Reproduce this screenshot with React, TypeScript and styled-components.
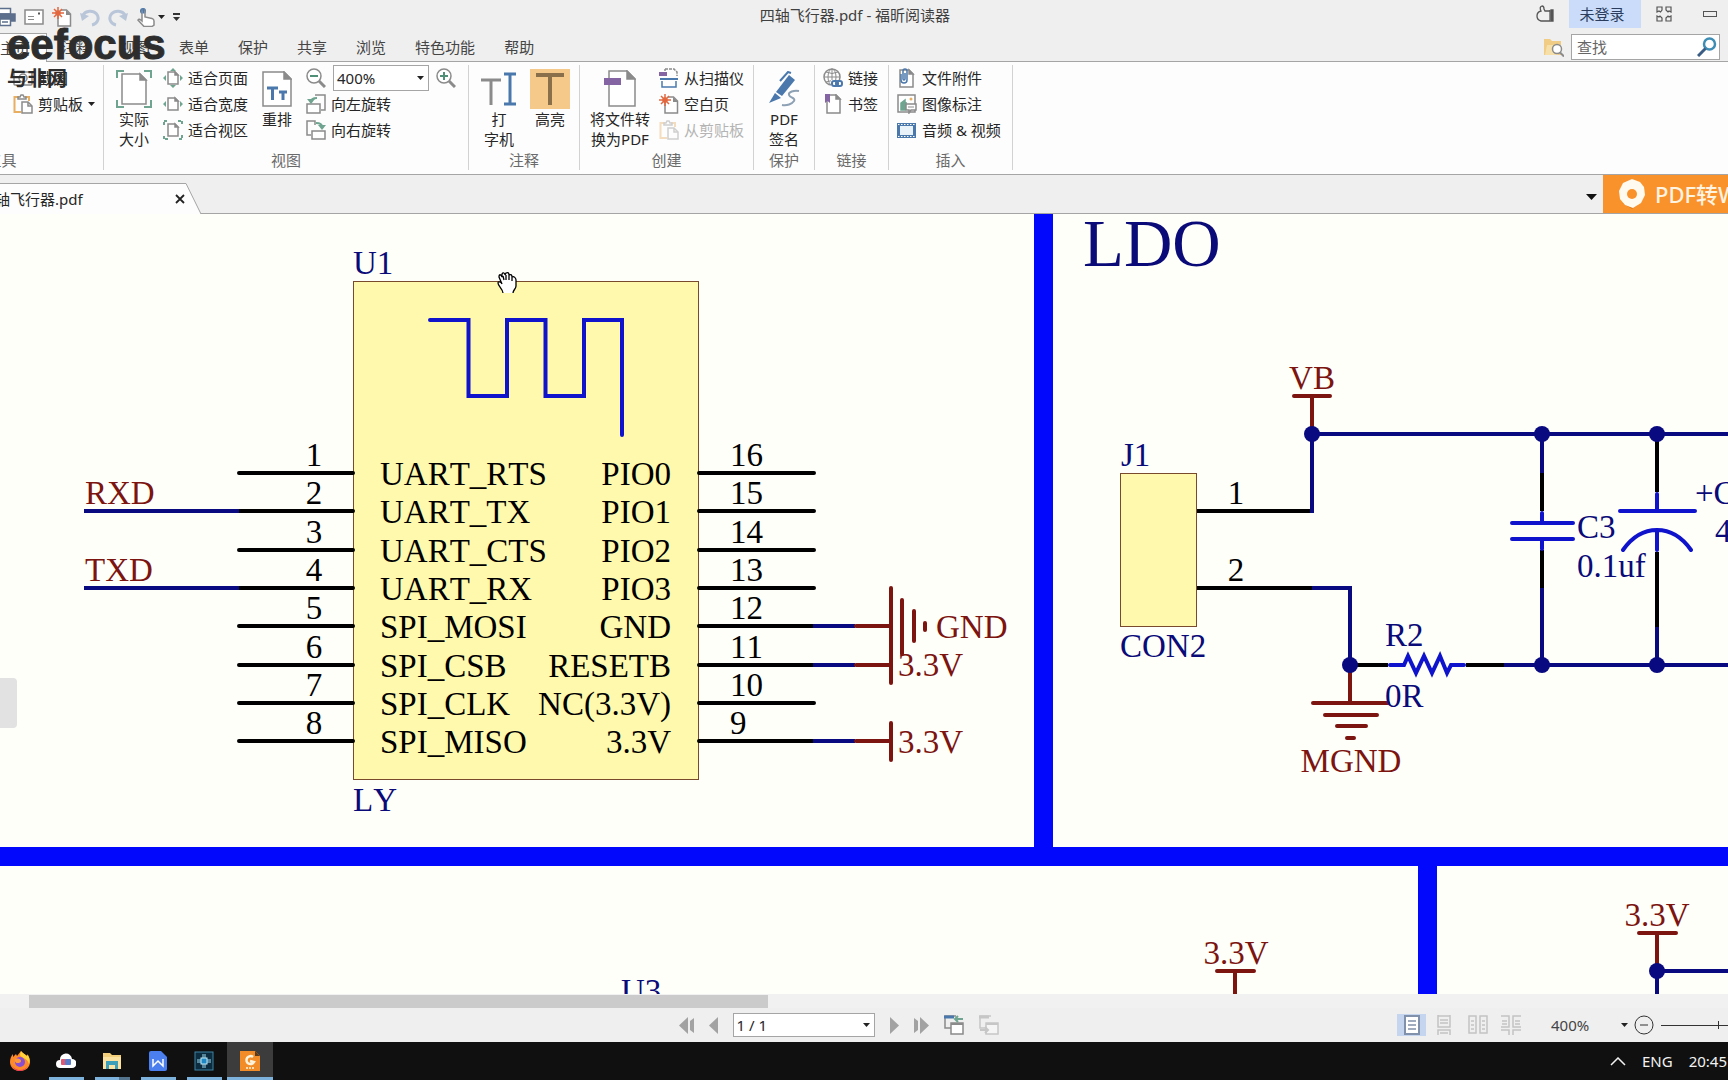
import React from "react";
import styled, { createGlobalStyle, css } from "styled-components";

const GlobalStyle = createGlobalStyle`
  *, *::before, *::after { box-sizing: border-box; }
  body { margin: 0; overflow: hidden; }
  button, select, input {
    font: inherit;
    color: inherit;
    margin: 0;
    padding: 0;
    border: 0;
    background: none;
  }
  button { cursor: pointer; }
  svg { display: block; flex: none; }
`;

const ui = {
  chrome: "#efefef",
  panel: "#fdfdfd",
  line: "#a5a5a5",
  text: "#262626",
  muted: "#6a6a6a",
  grey: "#8b8b8b",
  green: "#6fa590",
  blue: "#4a78ad",
  purple: "#8564a4",
  orange: "#e2683f",
};

/* ---------- window frame ---------- */

const Shell = styled.div`
  position: relative;
  display: flex;
  flex-direction: column;
  height: 100vh;
  overflow: hidden;
  background: ${ui.chrome};
  color: ${ui.text};
  font: 15px/20px "Noto Sans", "Noto Sans CJK SC", sans-serif;
`;

const TitleBar = styled.header`
  display: grid;
  grid-template-columns: 1fr auto 1fr;
  height: 33px;
  flex: none;
`;

const QuickAccess = styled.div`
  display: flex;
  align-items: center;
  gap: 8px;
`;

const IconButton = styled.button`
  display: flex;
  align-items: center;
  justify-content: center;
  gap: 2px;
  flex: none;
`;

const WindowTitle = styled.h1`
  margin: 0;
  padding: 5px 18px 0 0;
  font-size: 15px;
  font-weight: 400;
  line-height: 20px;
  color: #404040;
`;

const WindowTools = styled.div`
  display: flex;
  justify-content: flex-end;
  gap: 15px;
  height: 28px;
  padding-right: 11px;
`;

const Login = styled.button`
  width: 72px;
  padding-right: 6px;
  background: #cadcfa;
  color: #2c3c5c;
  text-align: center;
`;

const MenuRow = styled.nav`
  display: flex;
  height: 29px;
  flex: none;
  border-bottom: 1px solid ${ui.line};
`;

const MenuTab = styled.button<{ $active?: boolean }>`
  padding: 0 15px 0 14px;
  color: #454545;
  ${(p) =>
    p.$active &&
    css`
      height: 29px;
      padding: 0 16px 0 0;
      background: ${ui.panel};
      border-top: 1px solid ${ui.line};
      border-right: 1px solid ${ui.line};
    `}
`;

const SearchArea = styled.form`
  display: flex;
  align-items: center;
  gap: 7px;
  margin-left: auto;
  padding-right: 8px;
`;

const SearchField = styled.label`
  display: flex;
  align-items: center;
  width: 149px;
  height: 26px;
  padding: 0 2px 0 5px;
  background: #fff;
  border: 1px solid ${ui.line};
`;

const SearchInput = styled.input`
  flex: 1;
  min-width: 0;
  outline: 0;
  &::placeholder {
    color: #666;
    opacity: 1;
  }
`;

/* ---------- ribbon ---------- */

const Ribbon = styled.div`
  display: flex;
  height: 113px;
  flex: none;
  padding: 3px 0 4px;
  background: ${ui.panel};
  border-bottom: 1px solid ${ui.line};
`;

const Group = styled.section<{ $w: number; $cut?: boolean }>`
  display: flex;
  flex-direction: column;
  flex: none;
  width: ${(p) => p.$w}px;
  border-right: 1px solid #d2d2d2;
  ${(p) => p.$cut && "margin-left: -100px;"}
`;

const GroupBody = styled.div<{ $pad?: number }>`
  display: flex;
  gap: 7px;
  height: 85px;
  padding-left: ${(p) => p.$pad ?? 8}px;
`;

const GroupName = styled.h2`
  margin: 0;
  font-size: 15px;
  font-weight: 400;
  line-height: 20px;
  text-align: center;
  color: ${ui.muted};
`;

const Stack = styled.div`
  display: flex;
  flex-direction: column;
`;

const Row = styled.div`
  display: flex;
  align-items: center;
  gap: 7px;
  height: 26px;
`;

const SmallButton = styled.button`
  display: flex;
  align-items: center;
  gap: 5px;
  height: 26px;
  white-space: nowrap;
  &:disabled {
    color: #b4b4b4;
  }
`;

const BigButton = styled.button<{ $wide?: boolean }>`
  display: flex;
  flex-direction: column;
  align-items: center;
  width: ${(p) => (p.$wide ? 64 : 44)}px;
  padding-top: 4px;
`;

const BigIcon = styled.span<{ $on?: boolean }>`
  display: flex;
  align-items: center;
  justify-content: center;
  width: 40px;
  height: 40px;
  background: ${(p) => (p.$on ? "#f5c98a" : "transparent")};
`;

const SelectBox = styled.span<{ $w: number; $h: number; $plain?: boolean }>`
  position: relative;
  display: flex;
  width: ${(p) => p.$w}px;
  height: ${(p) => p.$h}px;
  flex: none;
  background: ${(p) => (p.$plain ? "transparent" : "#fff")};
  border: ${(p) => (p.$plain ? "0" : `1px solid ${ui.line}`)};
  svg {
    position: absolute;
    right: 4px;
    top: calc(50% - 2px);
    pointer-events: none;
  }
`;

const Select = styled.select`
  width: 100%;
  padding-left: 3px;
  appearance: none;
  outline: 0;
`;

/* ---------- document tabs ---------- */

const DocTabs = styled.div`
  display: flex;
  align-items: flex-end;
  height: 39px;
  flex: none;
  border-bottom: 1px solid ${ui.line};
`;

const DocTab = styled.div`
  display: flex;
  align-items: center;
  justify-content: space-between;
  width: 217px;
  height: 31px;
  margin: 0 0 -1px -32px;
  padding-left: 12px;
  background: ${ui.panel};
  border-top: 1px solid ${ui.line};
`;

const EdgeShape = styled.svg`
  margin-bottom: -1px;
`;

const DocActions = styled.div`
  display: flex;
  align-items: stretch;
  gap: 6px;
  height: 38px;
  margin-left: auto;
`;

const ListButton = styled(IconButton)`
  padding-top: 5px;
`;

const Promo = styled.button`
  display: flex;
  align-items: center;
  gap: 9px;
  width: 125px;
  padding-left: 15px;
  overflow: hidden;
  white-space: nowrap;
  background: #fa922b;
  color: #fff3e2;
  font-size: 22px;
  font-weight: 500;
  line-height: 28px;
`;

/* ---------- document ---------- */

const Viewport = styled.main`
  position: relative;
  flex: 1;
  min-height: 0;
  overflow: hidden;
  background: #fffffa;
`;

const SideHandle = styled.button`
  position: absolute;
  left: 0;
  top: 464px;
  width: 17px;
  height: 50px;
  border-radius: 0 4px 4px 0;
  background: #e2e2e2;
`;

const Sheet = styled.svg`
  font-family: "Liberation Serif", serif;
  font-size: 33px;
  font-kerning: none;
  .wire { stroke: #0a0a80; }
  .pin { stroke: #000; }
  .power { stroke: #7c1410; }
  .part { stroke: #0f14cc; }
  .wire, .pin, .power, .part { fill: none; stroke-width: 4px; }
  .power, .part { stroke-linecap: round; }
  .body { fill: #fff9ae; stroke: #7a4a2c; stroke-width: 1px; }
  .frame { fill: none; stroke: #0208fc; stroke-width: 19px; }
  .dot { fill: #0a0a80; }
  .name { fill: #0a0a78; }
  .net { fill: #7c1410; }
  .end { text-anchor: end; }
  .mid { text-anchor: middle; }
  .title { fill: #0a0a78; font-size: 67px; }
`;

const ScrollTrack = styled.div`
  height: 14px;
  flex: none;
  padding: 1px 0 0 29px;
  background: #f1f1f1;
`;

const ScrollThumb = styled.div`
  width: 43.5%;
  height: 13px;
  background: #cbcbcb;
`;

/* ---------- status bar ---------- */

const StatusBar = styled.footer`
  display: flex;
  align-items: center;
  height: 34px;
  flex: none;
`;

const Spacer = styled.span<{ $grow: number }>`
  flex: ${(p) => p.$grow} 1 0;
`;

const Pager = styled.div`
  display: flex;
  align-items: center;
  gap: 15px;
`;

const ViewModes = styled.div`
  display: flex;
  align-items: center;
  gap: 4px;
`;

const ModeButton = styled(IconButton)<{ $on?: boolean }>`
  width: 29px;
  height: 22px;
  background: ${(p) => (p.$on ? "#c5d5ef" : "transparent")};
`;

const ZoomArea = styled.div`
  display: flex;
  align-items: center;
  gap: 2px;
  width: 180px;
  margin-left: 23px;
  overflow: hidden;
  color: #444;
`;

const Slider = styled.input`
  width: 115px;
  height: 20px;
  margin-left: 5px;
  flex: none;
  appearance: none;
  background:
    linear-gradient(#333, #333) center / 1px 8px no-repeat,
    linear-gradient(#333, #333) center / 100% 1px no-repeat;
  &::-webkit-slider-thumb {
    appearance: none;
    width: 8px;
    height: 16px;
    background: #555;
  }
`;

/* ---------- desktop task bar ---------- */

const TaskBar = styled.div`
  display: flex;
  height: 38px;
  flex: none;
  padding-left: 43px;
  background: #101010;
  color: #f2f2f2;
`;

const Task = styled.button<{ $active?: boolean; $first?: boolean }>`
  display: flex;
  flex-direction: column;
  align-items: center;
  justify-content: space-between;
  width: 46px;
  padding-top: 9px;
  background: ${(p) => (p.$active ? "#3c3c3c" : "transparent")};
  ${(p) => p.$first && "margin-left: -46px;"}
`;

const Running = styled.span<{ $full?: boolean; $multi?: boolean }>`
  width: ${(p) => (p.$full ? "100%" : "35px")};
  height: 3px;
  background: ${(p) =>
    p.$multi
      ? "linear-gradient(90deg, #7db2dc 24px, #54748e 24px)"
      : "#7db2dc"};
`;

const Tray = styled.div`
  display: flex;
  align-items: center;
  gap: 16px;
  margin-left: auto;
  padding-right: 1px;
`;

const Watermark = styled.div`
  position: absolute;
  left: 7px;
  top: 24px;
  pointer-events: none;
  color: #2d2d2d;
  font: 700 42px/42px "Liberation Sans", sans-serif;
  -webkit-text-stroke: 1px #2d2d2d;
`;

const WatermarkSub = styled.div`
  font: 700 20px/24px "Noto Sans CJK SC", sans-serif;
  -webkit-text-stroke: 0;
`;

/* ---------- icons ---------- */

const Caret = ({ w = 7, h = 4, color = "#222" }) => (
  <svg width={w} height={h} viewBox="0 0 8 4" preserveAspectRatio="none">
    <path d="M0 0h8L4 4z" fill={color} />
  </svg>
);

const Ic = ({
  s = 20,
  h,
  children,
}: {
  s?: number;
  h?: number;
  children: React.ReactNode;
}) => (
  <svg
    width={s}
    height={h ?? s}
    viewBox={`0 0 ${s} ${h ?? s}`}
    fill="none"
    stroke={ui.grey}
    strokeWidth="1.5"
  >
    {children}
  </svg>
);

const Burst = ({ x = 6, y = 6 }) => (
  <g stroke={ui.orange} strokeWidth="1.5" transform={`translate(${x} ${y})`}>
    <path d="M0-6V6M-6 0H6M-4-4L4 4M4-4L-4 4" />
    <circle r="2" fill={ui.orange} />
  </g>
);

const PrintIcon = () => (
  <svg width="16" height="20" viewBox="4 0 16 20" fill="none" strokeWidth="1.5" stroke="#5c6f8c">
    <path d="M4 1.500h10.500V7H4" fill="#fff" />
    <path d="M4 7h15v7H4z" fill="#5c6f8c" />
    <path d="M4 12h10.500v6.500H4z" fill="#fff" />
    <path d="M6 15h6" />
  </svg>
);

const MailIcon = () => (
  <Ic>
    <rect x="1" y="3" width="18" height="14" fill="#fff" />
    <path d="M4 9.500h6M4 12.500h6" strokeWidth="1" />
    <rect x="14" y="5.500" width="2" height="2" fill="#555" stroke="none" />
  </Ic>
);

const NewDocIcon = () => (
  <Ic>
    <path d="M6 5v14h12.500V7l-4-4H9" fill="#fff" />
    <path d="M14 3v5h5z" fill={ui.grey} stroke="none" />
    <Burst />
  </Ic>
);

const UndoIcon = ({ flip }: { flip?: boolean }) => (
  <Ic>
    <g transform={flip ? "translate(20 0) scale(-1 1)" : undefined}>
      <path d="M3 8a8 7 0 1 1 9 10" stroke="#b9c5d8" strokeWidth="3" />
      <path d="M0 6l2 8 7-5z" fill="#b9c5d8" stroke="none" />
    </g>
  </Ic>
);

const TouchIcon = () => (
  <Ic>
    <circle cx="7" cy="4" r="3" fill={ui.blue} stroke="none" />
    <path
      d="M6 12V4a1.500 1.500 0 0 1 3 0v6l7 1.500q2 .5 2 2.500v4l-2 1.500H8L2 13q1-2 4 1z"
      fill="#fff"
    />
    <path d="M7.500 1.500v5" stroke={ui.blue} strokeWidth="2" />
  </Ic>
);

const CameraIcon = () => (
  <Ic>
    <rect x="1" y="4" width="18" height="13" rx="1" />
    <circle cx="10" cy="10" r="4" />
  </Ic>
);

const PasteIcon = ({ faded }: { faded?: boolean }) => (
  <Ic>
    <g opacity={faded ? 0.4 : 1}>
      <path d="M6 3H1.500v15H8M12 3h4v4" stroke="#e8ae62" strokeWidth="2" />
      <path d="M5 5V3h2l1-2h2l1 2h2v2z" fill="#fff" />
      <path d="M9 8h6l4 4v7H9z" fill="#fff" />
      <path d="M15 8v4h4" />
    </g>
  </Ic>
);

const Page = ({ x = 6, y = 3, w = 22, h = 30, f = 6 }) => (
  <g>
    <path d={`M${x} ${y}h${w - f}l${f} ${f}v${h - f}h${-w}z`} fill="#fff" />
    <path d={`M${x + w - f} ${y}v${f}h${f}z`} fill={ui.grey} />
  </g>
);

const ActualSizeIcon = () => (
  <Ic s={36} h={38}>
    <path
      d="M1 8V1h7M28 1h7v7M35 30v7h-7M8 37H1v-7"
      stroke={ui.green}
      strokeWidth="2"
    />
    <Page x={6} y={4} w={24} h={30} />
  </Ic>
);

const FitIcon = ({ kind }: { kind: "page" | "width" | "area" }) => (
  <Ic>
    <Page x={5} y={4} w={10} h={12} f={3} />
    {kind !== "area" && (
      <path d="M0 10l3-3v6zM20 10l-3-3v6z" fill={ui.green} stroke="none" />
    )}
    {kind === "page" && (
      <path d="M10 0l3 3H7zM10 20l3-3H7z" fill={ui.green} stroke="none" />
    )}
    {kind === "area" && (
      <path
        d="M1 5V1h4M15 1h4v4M19 15v4h-4M5 19H1v-4"
        stroke={ui.green}
        strokeWidth="2"
        strokeDasharray="3 1"
      />
    )}
  </Ic>
);

const ReflowIcon = () => (
  <Ic s={30} h={36}>
    <Page x={1} y={1} w={28} h={34} f={7} />
    <path d="M5 17h11M10.500 17v12M17 21h8M21 21v8" stroke={ui.blue} strokeWidth="3" />
  </Ic>
);

const ZoomIcon = ({ plus }: { plus?: boolean }) => (
  <Ic>
    <circle cx="8" cy="8" r="7" fill="#fff" />
    <path d="M13 13l6 6" strokeWidth="3" />
    <path d={plus ? "M4 8h8M8 4v8" : "M4 8h8"} stroke="#4f8f78" strokeWidth="2" />
  </Ic>
);

const RotateLeftIcon = () => (
  <Ic>
    <path d="M11 1h8v15h-4M9 1h3" />
    <path d="M1 10h13v9H1z" fill="#fff" />
    <path d="M5 8q0-4 6-4" stroke={ui.green} strokeWidth="2" />
    <path d="M1 5l4 5 4-5z" fill={ui.green} stroke="none" />
  </Ic>
);

const RotateRightIcon = () => (
  <Ic>
    <path d="M5 15H1V1h8v4" />
    <path d="M6 11h13v8H6z" fill="#fff" />
    <path d="M10 3q6 0 6 4" stroke={ui.green} strokeWidth="2" />
    <path d="M12 5l4 5 4-5z" fill={ui.green} stroke="none" />
  </Ic>
);

const TypeIcon = () => (
  <Ic s={36} h={34}>
    <path d="M0 8h20M10 8v25" strokeWidth="3" />
    <path d="M23 2h12M23 32h12M29 2v30" stroke={ui.blue} strokeWidth="3" />
  </Ic>
);

const HighlightIcon = () => (
  <Ic s={28} h={32}>
    <path d="M0 2h28M14 2v30" stroke="#8a6f4b" strokeWidth="4" />
  </Ic>
);

const ConvertIcon = () => (
  <Ic s={32} h={38}>
    <Page x={5} y={1} w={26} h={35} f={8} />
    <path d="M0 8h17v7H0z" fill={ui.purple} stroke="none" />
  </Ic>
);

const ScannerIcon = () => (
  <Ic>
    <path d="M6 1h9l3 3v4M6 1v2" strokeDasharray="3 1" />
    <path d="M0 4h8v4H0z" fill={ui.purple} stroke="none" />
    <path d="M1 11h18" stroke={ui.blue} strokeWidth="2" />
    <path d="M3 13v6h14v-6" stroke={ui.blue} />
  </Ic>
);

const SignIcon = () => (
  <Ic s={32} h={36}>
    <path d="M8 21L21 4l6 5L14 25z" fill={ui.blue} stroke="none" />
    <path d="M7 22l6 5-12 5z" fill={ui.blue} stroke="none" />
    <path d="M12 10l8-9 3 1" stroke={ui.blue} strokeWidth="2" />
    <path
      d="M31 20c-5-1-11 1-10 4s7 3 5 6-7 5-12 4"
      stroke="#8da0b4"
      strokeWidth="2"
    />
  </Ic>
);

const LinkIcon = () => (
  <Ic>
    <circle cx="9" cy="9" r="8" />
    <path d="M1 9h16M9 1v16M3 4q6 3 12 0M3 14q6-3 12 0" strokeWidth="1" />
    <ellipse cx="9" cy="9" rx="4" ry="8" strokeWidth="1" />
    <path d="M8 12h12v8H8z" fill="#fff" stroke="none" />
    <rect x="9" y="13" width="6" height="5" rx="2" stroke={ui.blue} strokeWidth="2" />
    <rect x="13" y="13" width="6" height="5" rx="2" stroke={ui.blue} strokeWidth="2" />
  </Ic>
);

const BookmarkIcon = () => (
  <Ic>
    <Page x={4} y={1} w={13} h={18} f={4} />
    <path d="M2 0h5v9l-2.500-2L2 9z" fill={ui.purple} stroke="none" />
  </Ic>
);

const AttachIcon = () => (
  <Ic>
    <Page x={3} y={2} w={13} h={17} f={4} />
    <path
      d="M4 6v6a3 3 0 0 0 6 0V3a2 2 0 0 0-4 0v8a1 1 0 0 0 2 0V5"
      stroke={ui.blue}
    />
  </Ic>
);

const ImageNoteIcon = () => (
  <Ic>
    <path d="M1 1h17v17H1z" fill="#fff" />
    <path d="M4 16V9l4-3v10zM9 16V8" fill={ui.green} stroke={ui.green} />
    <circle cx="14" cy="5" r="1.500" fill="#e8ae62" stroke="none" />
    <path d="M9 10h10v6h-5l-2 3v-3H9z" fill="#fff" />
    <path d="M11 13h6" strokeWidth="1" />
  </Ic>
);

const VideoIcon = () => (
  <Ic>
    <rect x="0" y="3" width="19" height="15" fill={ui.blue} stroke="none" />
    <rect x="3" y="6" width="13" height="9" fill="#e9f2f8" stroke="none" />
    <path d="M1 4.500h17M1 16.500h17" stroke="#fff" strokeDasharray="1.500 1.500" strokeWidth="1" />
  </Ic>
);

const LikeIcon = () => (
  <svg width="18" height="18" viewBox="0 0 18 18" fill="none" stroke="#555" strokeWidth="1.3">
    <path d="M14 5v11H5q-4-1-4-5t4-5q-2-4 1-5 2 0 2 3l1 2h5" />
    <path d="M15 5h2v11h-2z" fill="#555" />
  </svg>
);

const GridIcon = () => (
  <svg width="16" height="16" viewBox="0 0 16 16" fill="none" stroke="#555" strokeWidth="1.200">
    <path d="M1 1h5v3L4.500 6 3 5 1 6zM10 1h5v5l-2-1-1 1-2-2zM1 10l2 1 1-1 2 2v3H1zM10 12l2-2 1 1 2-1v5h-5z" />
  </svg>
);

const FolderFind = () => (
  <Ic>
    <path d="M0 2h6l2 2h9v14H0z" fill="#f0cc85" stroke="none" />
    <path d="M3 8h14l-3 10H1z" fill="#f7dfa9" stroke="none" />
    <circle cx="13" cy="12" r="4.500" fill="#fff" />
    <path d="M16 15.500l4 4" strokeWidth="2" />
  </Ic>
);

const FindIcon = () => (
  <Ic>
    <circle cx="12.500" cy="7" r="5.500" stroke="#3e8db5" strokeWidth="2.500" fill="#fff" />
    <path d="M8.500 11.500L1 19" stroke="#3a5d86" strokeWidth="3" />
  </Ic>
);

const CloseIcon = () => (
  <svg width="10" height="10" viewBox="0 0 10 10" stroke="#222" strokeWidth="1.800">
    <path d="M1 1l8 8M9 1L1 9" />
  </svg>
);

const TabEdge = () => (
  <EdgeShape width="17" height="31" viewBox="0 0 17 31">
    <path d="M0 0.500h1l15 30.500H0z" fill={ui.panel} />
    <path d="M0 0.500h1l15 30.500" fill="none" stroke={ui.line} />
  </EdgeShape>
);

const PromoLogo = () => (
  <svg width="28" height="30" viewBox="0 0 28 30">
    <path d="M20 26L4 24l10 6z" fill="#e07a18" />
    <path
      d="M14 0l8 3 4 5 1 8-4 8-8 5-8-3-5-6-1-8L5 4z"
      fill="#fffaf0"
    />
    <circle cx="14" cy="15" r="5" fill="#fa922b" />
  </svg>
);

const Step = ({ double, back }: { double?: boolean; back?: boolean }) => (
  <svg
    width={double ? 15 : 9}
    height="17"
    viewBox={double ? "0 0 15 17" : "0 0 9 17"}
    fill="#a2a2a2"
  >
    <g transform={back ? `translate(${double ? 15 : 9} 0) scale(-1 1)` : undefined}>
      {double ? <path d="M0 1l4 3v9l-4 3zM6 0l9 8.500L6 17z" /> : <path d="M0 0l9 8.500L0 17z" />}
    </g>
  </svg>
);

const ViewHistory = ({ next }: { next?: boolean }) => (
  <Ic>
    <g opacity={next ? 0.4 : 1}>
      <path d="M7 13H1V1h11" />
      <path d="M0 2h10" stroke={next ? ui.grey : ui.blue} strokeWidth="3" />
      <path d="M7 8h12v11H7z" fill="#fff" />
      <path d="M7 9h12" strokeWidth="2" />
      {next ? (
        <path d="M1 15h8M6 12l3 3-3 3" strokeWidth="2" />
      ) : (
        <path d="M19 4h-8M14 1l-3 3 3 3" stroke={ui.green} strokeWidth="2" />
      )}
    </g>
  </Ic>
);

const SinglePage = () => (
  <svg width="16" height="20" viewBox="0 0 16 20" fill="#fff" stroke="#8291ab" strokeWidth="2">
    <path d="M1 1h14v18H1z" />
    <path d="M4 6h8M4 10h8M4 14h8" strokeWidth="1.500" />
  </svg>
);

const ModeIcon = ({ kind }: { kind: 1 | 2 | 3 }) => (
  <svg width="20" height="20" viewBox="0 0 20 20" fill="none" stroke="#c4c4c4" strokeWidth="1.500">
    {kind === 1 && <path d="M3 0v12h12V0M3 1h12M5 5h8M5 8h8M3 20v-5h12v5M5 18h8" />}
    {kind === 2 && <path d="M1 1h7v17H1zM12 1h7v17h-7zM3 6h3M3 10h3M3 14h3M14 6h3M14 10h3M14 14h3" />}
    {kind === 3 && <path d="M0 1h8v11H0M20 1h-8v11h8M1 6h5M14 6h5M0 15h8v5M20 15h-8v5M1 9h5M14 9h5" />}
  </svg>
);

const Firefox = () => (
  <Ic>
    <g stroke="none">
      <path d="M10 20C4 20 0 16 0 11c0-3 1-6 3-8v3l3-3 1 2 4-5c1 2 4 3 6 5V3c3 4 3 6 3 8 0 5-4 9-10 9z" fill="#ff8a2a" />
      <path d="M11 0c1 2 4 3 6 5l1-1c2 4 2 7 1 9-2-7-7-5-9-9z" fill="#ffd23c" />
      <path d="M1 13c2 6 12 9 17 2-2 4-6 5-9 5s-7-3-8-7z" fill="#f2385a" />
      <circle cx="10" cy="11" r="5" fill="#8a4fd0" />
      <path d="M5 8c3-1 6 0 6 2s-3 2-4 2-3-2-2-4z" fill="#ff9a3c" />
    </g>
  </Ic>
);

const Cloud = () => (
  <Ic>
    <g stroke="none">
      <path d="M4 17a4 4 0 0 1 0-8 6 6 0 0 1 12-1 4.500 4.500 0 0 1 0 9z" fill="#fff" />
      <rect x="5" y="8" width="5" height="6" rx="1" fill="#e25a72" />
      <rect x="9" y="8" width="6" height="6" rx="1" fill="#5a7dc8" />
    </g>
  </Ic>
);

const Folder = () => (
  <Ic>
    <g stroke="none">
      <path d="M1 2h7l2 2h9v14H1z" fill="#f4cf7b" />
      <path d="M1 6h18v12H1z" fill="#fbe2a0" />
      <path d="M4 10h12v8h-3v-4H7v4H4z" fill="#3ea0b8" />
    </g>
  </Ic>
);

const Writer = () => (
  <Ic>
    <path d="M3 0h10l6 6v12q0 2-2 2H3q-2 0-2-2V2q0-2 2-2z" fill="#4b7ff0" stroke="none" />
    <path d="M5 8v7l5-5 5 5V8" stroke="#fff" />
  </Ic>
);

const Chip = () => (
  <Ic>
    <rect x="1" y="1" width="18" height="18" fill="#0c2c40" stroke="#3d84a4" strokeWidth="1" />
    <path d="M9 3v4M11 3v4M9 13v4M11 13v4M3 9h4M3 11h4M13 9h4M13 11h4" stroke="#9fdcf0" strokeWidth="1" />
    <rect x="7" y="7" width="6" height="6" fill="#1e88c4" stroke="#bfe9f7" strokeWidth="1" />
  </Ic>
);

const Foxit = () => (
  <Ic>
    <path d="M0 0h15l5 5v15H0z" fill="#f28c28" stroke="none" />
    <path d="M15 0v5h5z" fill="#5a3a1c" stroke="none" />
    <path d="M13 6a4 4 0 1 0 1 5l-4-1" stroke="#fff3dc" strokeWidth="2.500" />
    <path d="M6 17h8" stroke="#ffdcae" strokeWidth="2" strokeDasharray="2 1" />
  </Ic>
);

/* ---------- schematic ---------- */

const pinY = [473, 511, 550, 588, 626, 665, 703, 741];
const leftPins = [
  "UART_RTS", "UART_TX", "UART_CTS", "UART_RX",
  "SPI_MOSI", "SPI_CSB", "SPI_CLK", "SPI_MISO",
];
const rightPins = ["PIO0", "PIO1", "PIO2", "PIO3", "GND", "RESETB", "NC(3.3V)", "3.3V"];

const Schematic = () => (
  <Sheet width="1728" height="780" viewBox="0 214 1728 780" role="img" aria-label="四轴飞行器原理图">
    <rect className="body" x="353.500" y="281.500" width="345" height="498" />
    <path
      className="part"
      d="M430 320h38.500v76h38.500v-76h38.500v76h38.500v-76h38v115"
    />
    {pinY.map((y, i) => (
      <g key={y}>
        <path className="pin" strokeLinecap="round" d={`M239 ${y}h114M699 ${y}h115`} />
        <text x="314" y={y - 7} className="mid">{i + 1}</text>
        <text x="730" y={y - 7}>{16 - i}</text>
        <text x="380" y={y + 12}>{leftPins[i]}</text>
        <text x="671" y={y + 12} className="end">{rightPins[i]}</text>
      </g>
    ))}
    <path className="wire" d="M84 511h155M84 588h155M813 626h42M813 665h42M813 741h42" />
    <text className="name" x="353" y="274">U1</text>
    <text className="name" x="353" y="811">LY</text>
    <text className="net" x="85" y="504">RXD</text>
    <text className="net" x="85" y="581">TXD</text>
    <path
      className="power"
      d="M856 626h34M856 665h34M856 741h34M891 588v95M902 600v54M914 611v30M925 623v7M891 723v37"
    />
    <text className="net" x="936" y="638">GND</text>
    <text className="net" x="898" y="676">3.3V</text>
    <text className="net" x="898" y="753">3.3V</text>

    <path className="frame" d="M1043.500 214v643M0 856.500h1728M1427.500 857v140" />
    <text className="title" x="1083" y="266">LDO</text>

    <rect className="body" x="1120.500" y="473.500" width="76" height="153" />
    <text className="name" x="1121" y="466">J1</text>
    <text className="name" x="1120" y="657">CON2</text>
    <text x="1236" y="504" className="mid">1</text>
    <text x="1236" y="581" className="mid">2</text>
    <path className="power" d="M1312 434v-38M1294 396h36M1350 665v38M1313 703h75M1325 715h52M1337 726h29M1347 738h7" />
    <text className="net mid" x="1312" y="389">VB</text>
    <text className="net mid" x="1351" y="772">MGND</text>
    <path className="pin" d="M1197 511h115M1197 588h115M1350 665h38M1466 665h38M1542 473v38M1542 550v38M1657 434v58M1657 552v75" />
    <path className="wire" d="M1310 511h2V434h416M1312 588h38v77M1504 665h224M1542 434v39M1542 588v77M1657 627v38" />
    <path
      className="part"
      d="M1542 513v10M1512 523h61M1512 539h61M1542 539v10M1657 494v17M1620 511h75M1657 532v18M1623 550q14-20 34-20t34 20"
    />
    <path
      className="part"
      d="M1390 665h14l4-9 8 17 8-17 8 17 8-17 7 17 4-8h13"
    />
    <circle className="dot" cx="1312" cy="434" r="8" />
    <circle className="dot" cx="1542" cy="434" r="8" />
    <circle className="dot" cx="1657" cy="434" r="8" />
    <circle className="dot" cx="1350" cy="665" r="8" />
    <circle className="dot" cx="1542" cy="665" r="8" />
    <circle className="dot" cx="1657" cy="665" r="8" />
    <text className="name" x="1385" y="646">R2</text>
    <text className="name" x="1385" y="707">0R</text>
    <text className="name" x="1577" y="538">C3</text>
    <text className="name" x="1577" y="577">0.1uf</text>
    <text className="name" x="1695" y="504">+C2</text>
    <text className="name" x="1715" y="542">47uf</text>

    <text className="name" x="621" y="1002">U3</text>
    <text className="net mid" x="1236" y="964">3.3V</text>
    <path className="power" d="M1217 971h37M1235 971v30M1639 933h37M1657 933v38" />
    <text className="net mid" x="1657" y="926">3.3V</text>
    <path className="wire" d="M1728 971h-71v30" />
    <circle className="dot" cx="1657" cy="971" r="8" />

    <g transform="translate(497 272)" fill="#fff" stroke="#000" strokeWidth="1.300">
      <path
        stroke="none"
        d="M6 21c0-4-5-7-5-10 0-2 3-1 4 1L2 5c0-3 2-3 3 0L5 2c1-2 3-1 3 1l1-2c2-1 3 0 3 2 2-1 3 0 3 2 2-1 4 1 4 3v6c0 3-3 4-3 7z"
      />
      <path
        fill="none"
        d="M6 21c0-4-5-7-5-10 0-2 3-1 4 1L2 5c0-3 2-3 3 0L5 2c1-2 3-1 3 1l1-2c2-1 3 0 3 2 2-1 3 0 3 2 2-1 4 1 4 3v6c0 3-3 4-3 7M6 4l1 4M9 3v5M12 3v5M15 5v4"
      />
    </g>
  </Sheet>
);

/* ---------- page ---------- */

const menus = ["注释", "视图", "表单", "保护", "共享", "浏览", "特色功能", "帮助"];

export default function App() {
  return (
    <Shell>
      <GlobalStyle />
      <TitleBar>
        <QuickAccess>
          <IconButton aria-label="打印"><PrintIcon /></IconButton>
          <IconButton aria-label="邮件"><MailIcon /></IconButton>
          <IconButton aria-label="新建"><NewDocIcon /></IconButton>
          <IconButton aria-label="撤销"><UndoIcon /></IconButton>
          <IconButton aria-label="重做"><UndoIcon flip /></IconButton>
          <IconButton aria-label="触摸模式"><TouchIcon /><Caret /></IconButton>
          <IconButton aria-label="自定义快速访问栏">
            <svg width="7" height="8" viewBox="0 0 7 8"><path d="M0 0h7v2H0zM0 4h7L3.500 8z" fill="#333" /></svg>
          </IconButton>
        </QuickAccess>
        <WindowTitle>四轴飞行器.pdf - 福昕阅读器</WindowTitle>
        <WindowTools>
          <IconButton aria-label="赞"><LikeIcon /></IconButton>
          <Login>未登录</Login>
          <IconButton aria-label="皮肤"><GridIcon /></IconButton>
          <IconButton aria-label="最小化">
            <svg width="30" height="6" viewBox="0 0 30 6"><rect x="16.500" y="0.500" width="13" height="5" fill="none" stroke="#555" /></svg>
          </IconButton>
        </WindowTools>
      </TitleBar>

      <MenuRow>
        <MenuTab $active>主页</MenuTab>
        {menus.map((m) => <MenuTab key={m}>{m}</MenuTab>)}
        <SearchArea>
          <IconButton type="button" aria-label="高级查找"><FolderFind /></IconButton>
          <SearchField>
            <SearchInput aria-label="查找" placeholder="查找" />
            <FindIcon />
          </SearchField>
        </SearchArea>
      </MenuRow>

      <Ribbon>
        <Group $w={204} $cut>
          <GroupBody $pad={113}>
            <Stack>
              <SmallButton><CameraIcon />截图</SmallButton>
              <SmallButton><PasteIcon />剪贴板 <Caret /></SmallButton>
            </Stack>
          </GroupBody>
          <GroupName>工具</GroupName>
        </Group>
        <Group $w={365}>
          <GroupBody>
            <BigButton><BigIcon><ActualSizeIcon /></BigIcon>实际<br />大小</BigButton>
            <Stack>
              <SmallButton><FitIcon kind="page" />适合页面</SmallButton>
              <SmallButton><FitIcon kind="width" />适合宽度</SmallButton>
              <SmallButton><FitIcon kind="area" />适合视区</SmallButton>
            </Stack>
            <BigButton><BigIcon><ReflowIcon /></BigIcon>重排</BigButton>
            <Stack>
              <Row>
                <IconButton aria-label="缩小"><ZoomIcon /></IconButton>
                <SelectBox $w={96} $h={26}>
                  <Select aria-label="缩放比例"><option>400%</option></Select>
                  <Caret />
                </SelectBox>
                <IconButton aria-label="放大"><ZoomIcon plus /></IconButton>
              </Row>
              <SmallButton><RotateLeftIcon />向左旋转</SmallButton>
              <SmallButton><RotateRightIcon />向右旋转</SmallButton>
            </Stack>
          </GroupBody>
          <GroupName>视图</GroupName>
        </Group>
        <Group $w={111}>
          <GroupBody>
            <BigButton><BigIcon><TypeIcon /></BigIcon>打<br />字机</BigButton>
            <BigButton><BigIcon $on><HighlightIcon /></BigIcon>高亮</BigButton>
          </GroupBody>
          <GroupName>注释</GroupName>
        </Group>
        <Group $w={174}>
          <GroupBody>
            <BigButton $wide><BigIcon><ConvertIcon /></BigIcon>将文件转<br />换为PDF</BigButton>
            <Stack>
              <SmallButton><ScannerIcon />从扫描仪</SmallButton>
              <SmallButton><NewDocIcon />空白页</SmallButton>
              <SmallButton disabled><PasteIcon faded />从剪贴板</SmallButton>
            </Stack>
          </GroupBody>
          <GroupName>创建</GroupName>
        </Group>
        <Group $w={61}>
          <GroupBody>
            <BigButton><BigIcon><SignIcon /></BigIcon>PDF<br />签名</BigButton>
          </GroupBody>
          <GroupName>保护</GroupName>
        </Group>
        <Group $w={74}>
          <GroupBody>
            <Stack>
              <SmallButton><LinkIcon />链接</SmallButton>
              <SmallButton><BookmarkIcon />书签</SmallButton>
            </Stack>
          </GroupBody>
          <GroupName>链接</GroupName>
        </Group>
        <Group $w={124}>
          <GroupBody>
            <Stack>
              <SmallButton><AttachIcon />文件附件</SmallButton>
              <SmallButton><ImageNoteIcon />图像标注</SmallButton>
              <SmallButton><VideoIcon />音频 &amp; 视频</SmallButton>
            </Stack>
          </GroupBody>
          <GroupName>插入</GroupName>
        </Group>
      </Ribbon>

      <DocTabs>
        <DocTab>
          <span>四轴飞行器.pdf</span>
          <IconButton aria-label="关闭"><CloseIcon /></IconButton>
        </DocTab>
        <TabEdge />
        <DocActions>
          <ListButton aria-label="文档列表"><Caret w={11} h={6} color="#111" /></ListButton>
          <Promo><PromoLogo />PDF转Word</Promo>
        </DocActions>
      </DocTabs>

      <Viewport>
        <Schematic />
        <SideHandle aria-label="展开导航栏" />
      </Viewport>

      <ScrollTrack><ScrollThumb /></ScrollTrack>

      <StatusBar>
        <Spacer $grow={63} />
        <Pager>
          <IconButton aria-label="首页"><Step double back /></IconButton>
          <IconButton aria-label="上一页"><Step back /></IconButton>
          <SelectBox $w={142} $h={24}>
            <Select aria-label="页码"><option>1 / 1</option></Select>
            <Caret />
          </SelectBox>
          <IconButton aria-label="下一页"><Step /></IconButton>
          <IconButton aria-label="末页"><Step double /></IconButton>
          <IconButton aria-label="上一视图"><ViewHistory /></IconButton>
          <IconButton aria-label="下一视图"><ViewHistory next /></IconButton>
        </Pager>
        <Spacer $grow={37} />
        <ViewModes>
          <ModeButton $on aria-label="单页"><SinglePage /></ModeButton>
          <ModeButton aria-label="连续"><ModeIcon kind={1} /></ModeButton>
          <ModeButton aria-label="双页"><ModeIcon kind={2} /></ModeButton>
          <ModeButton aria-label="连续双页"><ModeIcon kind={3} /></ModeButton>
        </ViewModes>
        <ZoomArea>
          <SelectBox $w={84} $h={24} $plain>
            <Select aria-label="缩放"><option>400%</option></Select>
            <Caret />
          </SelectBox>
          <IconButton aria-label="缩小">
            <svg width="20" height="20" viewBox="0 0 20 20" fill="none" stroke="#333">
              <circle cx="10" cy="10" r="9" /><path d="M6 10h8" />
            </svg>
          </IconButton>
          <Slider type="range" aria-label="缩放滑块" min={0} max={100} defaultValue={100} />
        </ZoomArea>
      </StatusBar>

      <TaskBar>
        <Task $first aria-label="Firefox"><Firefox /><span /></Task>
        <Task aria-label="网盘"><Cloud /><Running /></Task>
        <Task aria-label="文件资源管理器"><Folder /><Running $multi /></Task>
        <Task aria-label="WPS"><Writer /><Running /></Task>
        <Task aria-label="芯片工具"><Chip /><Running /></Task>
        <Task $active aria-label="福昕阅读器"><Foxit /><Running $full /></Task>
        <Tray>
          <IconButton aria-label="显示隐藏的图标">
            <svg width="16" height="9" viewBox="0 0 16 9" fill="none" stroke="#f2f2f2" strokeWidth="1.500"><path d="M1 8l7-7 7 7" /></svg>
          </IconButton>
          <span>ENG</span>
          <time>20:45</time>
        </Tray>
      </TaskBar>

      <Watermark>
        eefocus
        <WatermarkSub>与非网</WatermarkSub>
      </Watermark>
    </Shell>
  );
}
